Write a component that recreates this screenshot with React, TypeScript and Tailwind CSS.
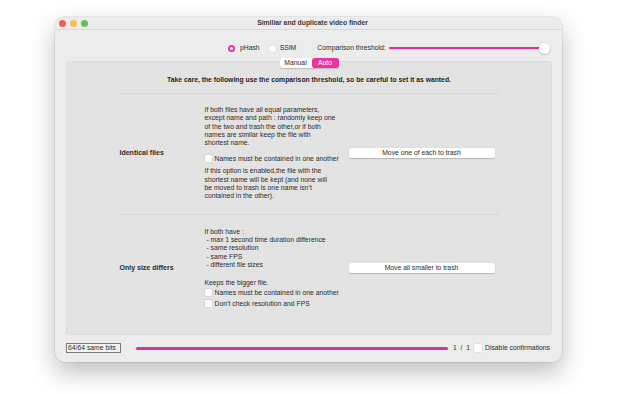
import React from 'react';

const font = { fontFamily: '"Liberation Sans", Arial, sans-serif' };

function Check({ label }: { label: string }) {
  return (
    <div className="flex items-center gap-[3px] h-[11px]">
      <span className="w-[7px] h-[7px] rounded-[1.5px] bg-white shadow-[0_0_0_0.5px_rgba(0,0,0,0.12)]" />
      <span>{label}</span>
    </div>
  );
}

function Lines({ lines }: { lines: string[] }) {
  return (
    <div className="leading-[8.3px] whitespace-nowrap">
      {lines.map((l, i) => (
        <div key={i} className="whitespace-pre">{l}</div>
      ))}
    </div>
  );
}

function TrashButton({ label }: { label: string }) {
  return (
    <button className="w-[146px] h-[10px] rounded-[2px] bg-white shadow-[0_0.5px_1px_rgba(0,0,0,0.2)] text-[6.8px] leading-[10px] text-[#2b2b2b]">
      {label}
    </button>
  );
}

export default function App() {
  return (
    <div className="w-[618px] h-[394px] bg-white pl-[55px] pt-[17px] text-[6.8px] text-[#2b2b2b]" style={font}>
      <div className="w-[507px] h-[345px] rounded-[9px] bg-[#ececec] shadow-[0_10px_24px_rgba(0,0,0,0.26),0_0_0_0.5px_rgba(0,0,0,0.12)] flex flex-col overflow-hidden">
        {/* title bar */}
        <div className="relative h-[13px] border-b border-[#dadada] flex items-center pl-[4px]">
          <div className="flex gap-[4px]">
            <span className="w-[7px] h-[7px] rounded-full bg-[#ec5f57]" />
            <span className="w-[7px] h-[7px] rounded-full bg-[#f3be4f]" />
            <span className="w-[7px] h-[7px] rounded-full bg-[#61c554]" />
          </div>
          <div className="flex-1 text-center font-bold text-[6.8px] text-[#3a3a3a] pr-[25px]">
            Similiar and duplicate video finder
          </div>
        </div>

        {/* hash + threshold */}
        <div className="mt-[13px] h-[10px] flex items-center pl-[173px]">
          <span className="w-[7px] h-[7px] rounded-full bg-[#e0369e] flex items-center justify-center">
            <span className="w-[3px] h-[3px] rounded-full bg-white" />
          </span>
          <span className="ml-[5px]">pHash</span>
          <span className="ml-[9px] w-[7px] h-[7px] rounded-full bg-white shadow-[0_0_0_0.5px_rgba(0,0,0,0.1)]" />
          <span className="ml-[4px]">SSIM</span>
          <span className="ml-[21px]">Comparison threshold:</span>
          <div className="ml-[3px] w-[161px] flex items-center">
            <div className="flex-1 h-[2px] rounded-full bg-[#d9329a] shadow-[0_0.5px_0_#f29bd0]" />
            <span className="-ml-[4px] w-[11px] h-[11px] rounded-full bg-white shadow-[0_0.5px_1.5px_rgba(0,0,0,0.35)]" />
          </div>
        </div>

        {/* tabs */}
        <div className="relative z-10 mt-[5px] flex justify-center pl-[1px]">
          <div className="flex h-[10px] rounded-[2.5px] bg-white shadow-[0_0.5px_1px_rgba(0,0,0,0.18)] text-[6.8px] leading-[10px]">
            <span className="w-[32px] text-center">Manual</span>
            <span className="w-[27px] text-center rounded-[2.5px] bg-[#e8369f] text-white">Auto</span>
          </div>
        </div>

        {/* panel */}
        <div className="-mt-[7px] mr-[10px] ml-[11px] h-[274px] rounded-[4px] bg-[#e3e3e3] border border-[#dbdbdb] pt-[14px] flex flex-col items-center">
          <div className="font-bold leading-[8px] text-[#1f1f1f]">
            Take care, the following use the comparison threshold, so be careful to set it as wanted.
          </div>
          <div className="mt-[9px] w-[379px] h-px bg-[#d7d7d7]" />

          <div className="mt-[12px] w-[379px] grid grid-cols-[85px_144px_146px] items-center">
            <div className="font-bold text-[7px]">Identical files</div>
            <div className="flex flex-col">
              <Lines
                lines={[
                  'If both files have all equal parameters,',
                  'except name and path : randomly keep one',
                  'of the two and trash the other,or if both',
                  'names are similar keep the file with',
                  'shortest name.',
                ]}
              />
              <div className="mt-[6px]">
                <Check label="Names must be contained in one another" />
              </div>
              <div className="mt-[3px]">
                <Lines
                  lines={[
                    'If this option is enabled,the file with the',
                    'shortest name will be kept (and none will',
                    'be moved to trash is one name isn\u2019t',
                    'contained in the other).',
                  ]}
                />
              </div>
            </div>
            <TrashButton label="Move one of each to trash" />
          </div>

          <div className="mt-[13px] w-[379px] h-px bg-[#d7d7d7]" />

          <div className="mt-[13px] w-[379px] grid grid-cols-[85px_144px_146px] items-center">
            <div className="font-bold text-[7px]">Only size differs</div>
            <div className="flex flex-col">
              <Lines
                lines={[
                  'If both have :',
                  ' - max 1 second time duration difference',
                  ' - same resolution',
                  ' - same FPS',
                  ' - different file sizes',
                ]}
              />
              <div className="mt-[10px] leading-[8px]">Keeps the bigger file.</div>
              <div>
                <Check label="Names must be contained in one another" />
                <Check label={'Don\u2019t check resolution and FPS'} />
              </div>
            </div>
            <TrashButton label="Move all smaller to trash" />
          </div>
        </div>

        {/* status bar */}
        <div className="mt-[8px] h-[10px] flex items-center pl-[11px]">
          <div className="w-[55px] h-[10px] border border-[#7a7a7a] bg-[#f3f3f3] leading-[8px] pl-[1px] whitespace-nowrap overflow-hidden">
            64/64 same bits
          </div>
          <div className="ml-[15px] w-[312px] h-[3px] rounded-full bg-[#d63397]" />
          <span className="ml-[5px] whitespace-pre">1  /  1</span>
          <span className="ml-[4px] w-[8px] h-[8px] rounded-[1.5px] bg-white shadow-[0_0_0_0.5px_rgba(0,0,0,0.1)]" />
          <span className="ml-[3px]">Disable confirmations</span>
        </div>
      </div>
    </div>
  );
}
